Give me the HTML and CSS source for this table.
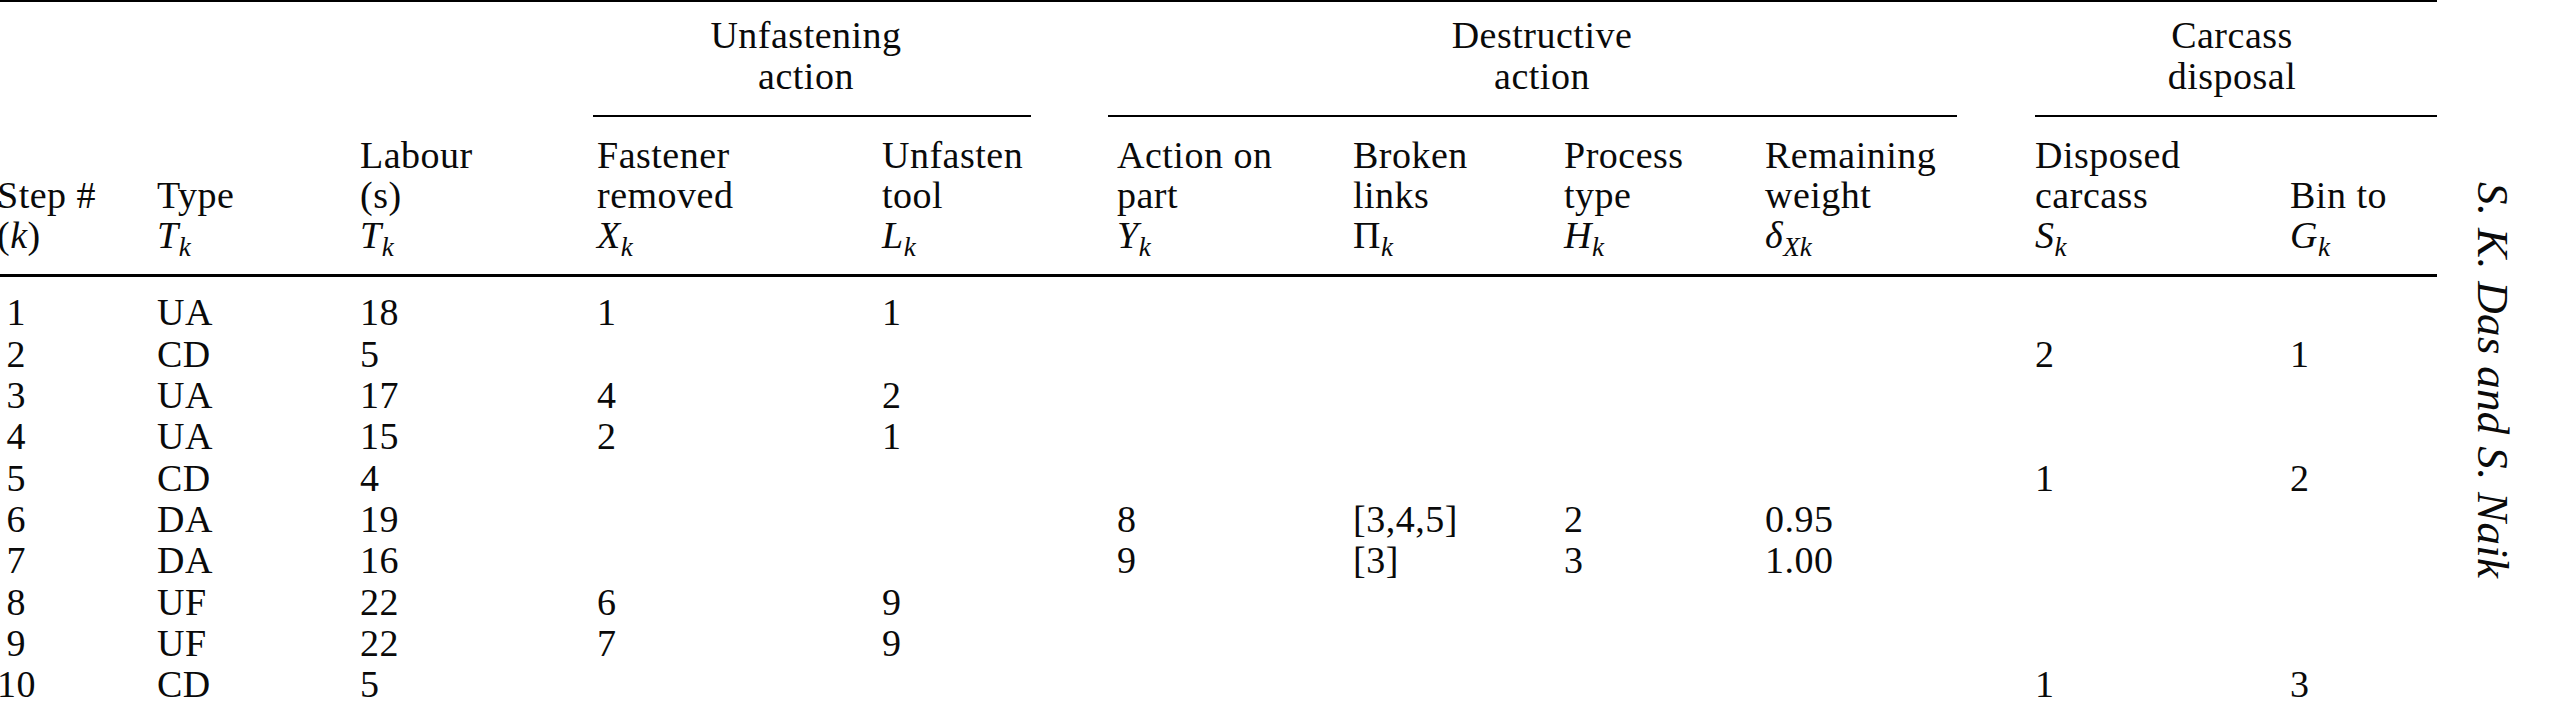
FILE: index.html
```html
<!DOCTYPE html>
<html lang="en">
<head>
<meta charset="utf-8">
<title>Disassembly sequence table</title>
<link rel="stylesheet" href="styles.css">
</head>
<body>
<div class="page">
  <div class="table">
    <div class="grid head">
      <div class="g g-unf">Unfastening<br>action</div>
      <div class="g g-des">Destructive<br>action</div>
      <div class="g g-car">Carcass<br>disposal</div>

      <div class="h c1"><div>Step #</div><div>(<i>k</i>)</div></div>
      <div class="h"><div>Type</div><div><i>T</i><sub>k</sub></div></div>
      <div class="h"><div>Labour</div><div>(s)</div><div><i>T</i><sub>k</sub></div></div>
      <div class="h"><div>Fastener</div><div>removed</div><div><i>X</i><sub>k</sub></div></div>
      <div class="h"><div>Unfasten</div><div>tool</div><div><i>L</i><sub>k</sub></div></div>
      <div class="h"><div>Action on</div><div>part</div><div><i>Y</i><sub>k</sub></div></div>
      <div class="h"><div>Broken</div><div>links</div><div>&Pi;<sub>k</sub></div></div>
      <div class="h"><div>Process</div><div>type</div><div><i>H</i><sub>k</sub></div></div>
      <div class="h"><div>Remaining</div><div>weight</div><div><i>&delta;</i><sub>Xk</sub></div></div>
      <div class="h"><div>Disposed</div><div>carcass</div><div><i>S</i><sub>k</sub></div></div>
      <div class="h"><div>Bin to</div><div><i>G</i><sub>k</sub></div></div>
    </div>

    <div class="grid body">
      <div class="step">1</div><div>UA</div><div>18</div><div>1</div><div>1</div><div></div><div></div><div></div><div></div><div></div><div></div>
      <div class="step">2</div><div>CD</div><div>5</div><div></div><div></div><div></div><div></div><div></div><div></div><div>2</div><div>1</div>
      <div class="step">3</div><div>UA</div><div>17</div><div>4</div><div>2</div><div></div><div></div><div></div><div></div><div></div><div></div>
      <div class="step">4</div><div>UA</div><div>15</div><div>2</div><div>1</div><div></div><div></div><div></div><div></div><div></div><div></div>
      <div class="step">5</div><div>CD</div><div>4</div><div></div><div></div><div></div><div></div><div></div><div></div><div>1</div><div>2</div>
      <div class="step">6</div><div>DA</div><div>19</div><div></div><div></div><div>8</div><div>[3,4,5]</div><div>2</div><div>0.95</div><div></div><div></div>
      <div class="step">7</div><div>DA</div><div>16</div><div></div><div></div><div>9</div><div>[3]</div><div>3</div><div>1.00</div><div></div><div></div>
      <div class="step">8</div><div>UF</div><div>22</div><div>6</div><div>9</div><div></div><div></div><div></div><div></div><div></div><div></div>
      <div class="step">9</div><div>UF</div><div>22</div><div>7</div><div>9</div><div></div><div></div><div></div><div></div><div></div><div></div>
      <div class="step">10</div><div>CD</div><div>5</div><div></div><div></div><div></div><div></div><div></div><div></div><div>1</div><div>3</div>
    </div>
  </div>
  <div class="runhead">S. K. Das and S. Naik</div>
</div>
</body>
</html>
```
FILE: styles.css
```css
html, body {
  margin: 0;
  padding: 0;
  background: #ffffff;
}

body {
  width: 2558px;
  height: 715px;
  overflow: hidden;
  font-family: "Liberation Serif", "Times New Roman", serif;
  font-size: 38px;
  letter-spacing: 0.5px;
  color: #0a0a0a;
}

.page {
  display: flex;
  align-items: flex-start;
}

.table {
  flex: none;
  width: 2440px;
  margin-left: -3px;
}

.grid {
  display: grid;
  grid-template-columns: 160px 203px 237px 285px 235px 236px 211px 201px 270px 255px 147px;
}

.head {
  border-top: 2px solid #000;
}

/* group headers */
.g {
  grid-row: 1;
  padding: 12.6px 0 17.4px;
  line-height: 41.5px;
  text-align: center;
  border-bottom: 2px solid #000;
}

.g-unf {
  grid-column: 4 / 6;
  margin: 0 86px 0 -4px;
  padding-right: 12px;
}

.g-des {
  grid-column: 6 / 10;
  margin: 0 78px 0 -9px;
  padding-left: 19px;
}

.g-car {
  grid-column: 10 / 12;
  margin: 0 0 0 0;
  padding-right: 8px;
}

/* column headers */
.h {
  grid-row: 2;
  display: flex;
  flex-direction: column;
  justify-content: flex-end;
  padding: 18px 0 19px;
  line-height: 40px;
  border-bottom: 3px solid #000;
  white-space: nowrap;
}

i {
  font-style: italic;
}

sub {
  font-size: 27px;
  font-style: italic;
  vertical-align: -8px;
  line-height: 0;
  letter-spacing: 0;
}

/* body rows */
.body {
  padding-top: 15.5px;
  grid-auto-rows: 41.3px;
  line-height: 41.3px;
  white-space: nowrap;
}

.step {
  text-align: right;
  padding-right: 131px;
}

/* running head */
.runhead {
  flex: none;
  writing-mode: vertical-rl;
  font-style: italic;
  font-size: 45px;
  line-height: 45px;
  letter-spacing: 0.3px;
  margin-top: 182px;
  margin-left: 33px;
  white-space: nowrap;
}
```
